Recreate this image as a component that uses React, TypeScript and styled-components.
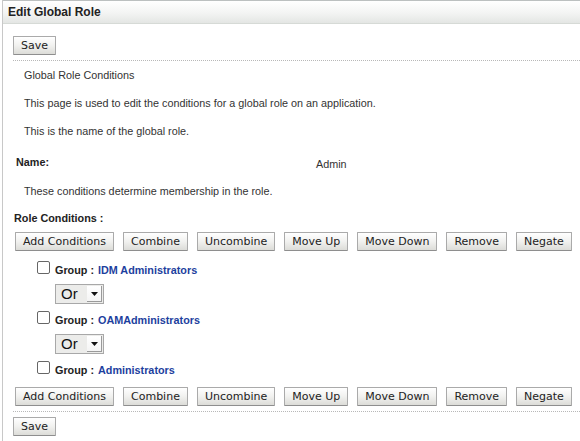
import { createGlobalStyle, styled } from 'styled-components';

const GlobalStyle = createGlobalStyle`
  html, body {
    margin: 0;
    padding: 0;
    background: #ffffff;
  }
  body {
    font-family: 'Liberation Sans', Arial, sans-serif;
    font-size: 10.8px;
    color: #333333;
  }
`;

const Panel = styled.div`
  margin-left: 2px;
  width: 578px;
  min-height: 441px;
  border-left: 1px solid #c8c8c8;
  box-sizing: border-box;
`;

const PanelHeader = styled.div`
  height: 22px;
  display: flex;
  align-items: center;
  padding-left: 5px;
  border-top: 1px solid #bcc0c0;
  border-bottom: 1px solid #d6dad6;
  background: linear-gradient(180deg, #ffffff 0%, #f3f4f3 55%, #e4e6e4 100%);
  font-size: 12px;
  font-weight: bold;
  color: #222222;
`;

const PanelBody = styled.div`
  padding-left: 10px;
`;

const Toolbar = styled.div<{ $top: number; $bottom: number }>`
  display: flex;
  padding: ${ ( { $top, $bottom } ) => `${ $top }px 0 ${ $bottom }px` };
`;

const Separator = styled.div`
  flex: 1;
  border-top: 1px dotted #b8b8b8;
`;

const Button = styled.button`
  height: 19px;
  padding: 0 7px;
  border: 1px solid #aaaaaa;
  border-bottom-color: #8e8e8e;
  border-radius: 1px;
  background: linear-gradient(180deg, #ffffff 0%, #f1f1ef 50%, #dcdcd8 100%);
  font-family: 'DejaVu Sans', sans-serif;
  font-size: 11px;
  color: #222222;
  line-height: 17px;
  white-space: nowrap;
`;

const ButtonRow = styled.div<{ $top: number }>`
  display: flex;
  gap: 9px;
  padding-left: 2px;
  margin-top: ${ ( { $top } ) => $top }px;
`;

const InfoLine = styled.div<{ $height: number; $indent: number }>`
  height: ${ ( { $height } ) => $height }px;
  display: flex;
  align-items: center;
  padding-left: ${ ( { $indent } ) => $indent }px;
  white-space: nowrap;
`;

const FieldRow = styled.div`
  height: 28px;
  margin-top: 3px;
  display: grid;
  grid-template-columns: 300px auto;
  align-items: center;
  padding-left: 3px;
`;

const FieldLabel = styled.span`
  font-weight: bold;
  color: #222222;
`;

const FieldValue = styled.span`
  padding-top: 3px;
`;

const SectionLabel = styled.div`
  height: 26px;
  display: flex;
  align-items: center;
  padding-left: 1px;
  font-weight: bold;
  color: #222222;
`;

const ConditionList = styled.div`
  display: flex;
  flex-direction: column;
  gap: 6px;
  padding: 9px 0 0 24px;
`;

const ConditionRow = styled.label`
  height: 20px;
  display: flex;
  align-items: center;
  font-weight: bold;
  color: #222222;
`;

const CheckBox = styled.input`
  appearance: none;
  width: 13px;
  height: 13px;
  margin: 0 5px 5px 0;
  border: 1px solid #666666;
  border-radius: 2px;
  background: #ffffff;
`;

const GroupLink = styled.a`
  margin-left: 4px;
  color: #1d3f9e;
  text-decoration: none;
`;

const OperatorSelect = styled.div`
  width: 49px;
  height: 20px;
  margin: 4px 0 0 18px;
  display: flex;
  box-sizing: border-box;
  border: 1px solid #a8a8a8;
  background: #ececea;
`;

const OperatorText = styled.span`
  flex: 1;
  padding-left: 5px;
  font-size: 15px;
  line-height: 18px;
  color: #111111;
`;

const ArrowBox = styled.span`
  width: 14px;
  margin: 1px;
  display: flex;
  align-items: center;
  justify-content: center;
  background: linear-gradient(180deg, #ffffff 0%, #f4f4f4 100%);
  border-right: 1px solid #9a9a9a;
  border-bottom: 1px solid #9a9a9a;
`;

const actions = [ 'Add Conditions', 'Combine', 'Uncombine', 'Move Up', 'Move Down', 'Remove', 'Negate' ];

const groups = [ 'IDM Administrators', 'OAMAdministrators', 'Administrators' ];

function ActionButtons( { top }: { top: number } ): JSX.Element {
  return (
    <ButtonRow $top={ top }>
      { actions.map( ( action ) => <Button key={ action }>{ action }</Button> ) }
    </ButtonRow>
  );
}

function Operator(): JSX.Element {
  return (
    <OperatorSelect>
      <OperatorText>Or</OperatorText>
      <ArrowBox>
        <svg width="7" height="4" viewBox="0 0 7 4">
          <path d="M0 0 H7 L3.5 4 Z" fill="#111" />
        </svg>
      </ArrowBox>
    </OperatorSelect>
  );
}

function App(): JSX.Element {
  return (
    <>
      <GlobalStyle />
      <Panel>
        <PanelHeader>Edit Global Role</PanelHeader>
        <PanelBody>
          <Toolbar $top={ 12 } $bottom={ 5 }>
            <Button>Save</Button>
          </Toolbar>
          <Toolbar $top={ 0 } $bottom={ 0 }>
            <Separator />
          </Toolbar>

          <InfoLine $height={ 28 } $indent={ 11 }>Global Role Conditions</InfoLine>
          <InfoLine $height={ 28 } $indent={ 11 }>
            This page is used to edit the conditions for a global role on an application.
          </InfoLine>
          <InfoLine $height={ 28 } $indent={ 11 }>This is the name of the global role.</InfoLine>

          <FieldRow>
            <FieldLabel>Name:</FieldLabel>
            <FieldValue>Admin</FieldValue>
          </FieldRow>

          <InfoLine $height={ 29 } $indent={ 11 }>
            These conditions determine membership in the role.
          </InfoLine>
          <SectionLabel>Role Conditions :</SectionLabel>

          <ActionButtons top={ 1 } />

          <ConditionList>
            { groups.map( ( group, index ) => (
              <div key={ group }>
                <ConditionRow>
                  <CheckBox type="checkbox" />
                  Group :
                  <GroupLink href="#">{ group }</GroupLink>
                </ConditionRow>
                { index < groups.length - 1 && <Operator /> }
              </div>
            ) ) }
          </ConditionList>

          <ActionButtons top={ 7 } />

          <Toolbar $top={ 5 } $bottom={ 5 }>
            <Separator />
          </Toolbar>
          <Toolbar $top={ 0 } $bottom={ 0 }>
            <Button>Save</Button>
          </Toolbar>
        </PanelBody>
      </Panel>
    </>
  );
}

export default App;
